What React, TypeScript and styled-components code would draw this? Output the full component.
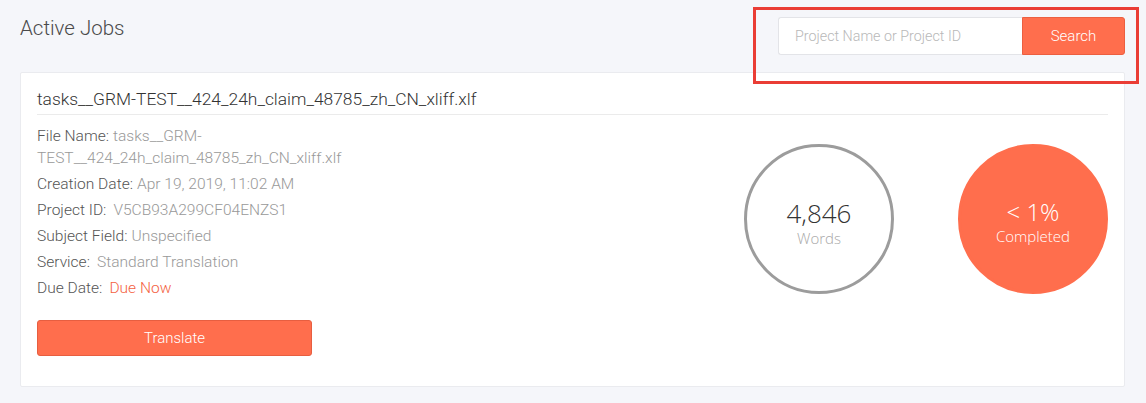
import { FC } from 'react'
import styled, { createGlobalStyle } from 'styled-components'

const ACCENT = '#ff6e4d'

const GlobalStyle = createGlobalStyle`
  html, body {
    margin: 0;
    padding: 0;
    background: #f5f6fa;
    font-family: Roboto, "Liberation Sans", Arial, sans-serif;
  }
  * {
    box-sizing: border-box;
  }
`

interface DetailRow {
  label: string
  value: string
  wide?: boolean
  accent?: boolean
}

const details: DetailRow[] = [
  { label: 'File Name:', value: 'tasks__GRM-TEST__424_24h_claim_48785_zh_CN_xliff.xlf' },
  { label: 'Creation Date:', value: 'Apr 19, 2019, 11:02 AM' },
  { label: 'Project ID:', value: 'V5CB93A299CF04ENZS1', wide: true },
  { label: 'Subject Field:', value: 'Unspecified' },
  { label: 'Service:', value: 'Standard Translation', wide: true },
  { label: 'Due Date:', value: 'Due Now', wide: true, accent: true },
]

const App: FC = () => {
  return (
    <Page>
      <GlobalStyle />
      <Header>
        <Title>Active Jobs</Title>
        <SearchForm onSubmit={(e) => e.preventDefault()}>
          <SearchInput placeholder="Project Name or Project ID" />
          <SearchButton type="submit">Search</SearchButton>
          <Highlight />
        </SearchForm>
      </Header>

      <JobCard>
        <JobTitle>tasks__GRM-TEST__424_24h_claim_48785_zh_CN_xliff.xlf</JobTitle>
        <JobBody>
          <DetailsColumn>
            <DetailList>
              {details.map(({ label, value, wide, accent }) => (
                <DetailItem key={label}>
                  <Label>{label}</Label>
                  <Value $wide={wide} $accent={accent}>
                    {value}
                  </Value>
                </DetailItem>
              ))}
            </DetailList>
            <TranslateButton>Translate</TranslateButton>
          </DetailsColumn>

          <Stats>
            <StatCircle>
              <StatNumber>4,846</StatNumber>
              <StatCaption>Words</StatCaption>
            </StatCircle>
            <StatCircle $filled>
              <StatNumber $filled>&lt; 1%</StatNumber>
              <StatCaption $filled>Completed</StatCaption>
            </StatCircle>
          </Stats>
        </JobBody>
      </JobCard>
    </Page>
  )
}

export default App

const Page = styled.div`
  padding: 17px 21px 16px 20px;
`

const Header = styled.div`
  display: flex;
  justify-content: space-between;
  align-items: flex-start;
  height: 55px;
`

const Title = styled.h1`
  margin: 0;
  font-size: 20.5px;
  line-height: 22px;
  font-weight: 300;
  color: #4a4a4a;
`

const SearchForm = styled.form`
  position: relative;
  display: flex;
  height: 38px;
`

// annotation box drawn over the search area
const Highlight = styled.div`
  position: absolute;
  left: -25px;
  top: -10px;
  right: -14px;
  bottom: -29px;
  border: 3px solid #ea3d35;
  pointer-events: none;
`

const SearchInput = styled.input`
  width: 244px;
  height: 38px;
  border: 1px solid #e3e4e8;
  border-right: none;
  border-radius: 3px 0 0 3px;
  background: #fff;
  padding: 0 16px;
  font-family: inherit;
  font-size: 14.3px;
  font-weight: 300;
  color: #444;
  outline: none;

  &::placeholder {
    color: #b8b8b8;
  }
`

const SearchButton = styled.button`
  width: 103px;
  height: 38px;
  border: 1px solid #ec5f40;
  border-radius: 0 3px 3px 0;
  background: ${ACCENT};
  color: #fff;
  font-family: inherit;
  font-size: 15px;
  font-weight: 300;
  cursor: pointer;
`

const JobCard = styled.div`
  background: #fff;
  border: 1px solid #eaebef;
  border-radius: 2px;
  padding: 16px 16px 31px 16px;
  height: 315px;
`

const JobTitle = styled.div`
  font-size: 17.4px;
  font-weight: 300;
  line-height: 20px;
  color: #333;
  padding-bottom: 5px;
  border-bottom: 1px solid #ebebeb;
`

const JobBody = styled.div`
  display: flex;
  justify-content: space-between;
  padding-top: 10px;
`

const DetailsColumn = styled.div`
  display: flex;
  flex-direction: column;
  width: 340px;
`

const DetailList = styled.div`
  display: flex;
  flex-direction: column;
  gap: 4px;
`

const DetailItem = styled.div`
  font-size: 15.55px;
  font-weight: 300;
  line-height: 22px;
`

const Label = styled.span`
  color: #555;
`

const Value = styled.span<{ $wide?: boolean; $accent?: boolean }>`
  color: ${({ $accent }) => ($accent ? '#f4623f' : '#999')};
  margin-left: ${({ $wide }) => ($wide ? '7px' : '4px')};
`

const TranslateButton = styled.button`
  margin-top: 21px;
  width: 275px;
  height: 36px;
  border: 1px solid #e75e40;
  border-radius: 3px;
  background: ${ACCENT};
  color: #fff;
  font-family: inherit;
  font-size: 15px;
  font-weight: 300;
  cursor: pointer;
`

const Stats = styled.div`
  display: flex;
  gap: 64px;
  margin-top: 19px;
`

const StatCircle = styled.div<{ $filled?: boolean }>`
  width: 150px;
  height: 150px;
  border-radius: 50%;
  display: flex;
  flex-direction: column;
  align-items: center;
  justify-content: center;
  font-family: "Open Sans", "Liberation Sans", sans-serif;
  background: ${({ $filled }) => ($filled ? ACCENT : '#fff')};
  border: 3px solid ${({ $filled }) => ($filled ? ACCENT : '#9c9c9c')};
  padding-top: ${({ $filled }) => ($filled ? '4px' : '8px')};
`

const StatNumber = styled.div<{ $filled?: boolean }>`
  font-size: ${({ $filled }) => ($filled ? '24px' : '26px')};
  font-weight: 300;
  line-height: 30px;
  color: ${({ $filled }) => ($filled ? '#fff' : '#333')};
`

const StatCaption = styled.div<{ $filled?: boolean }>`
  font-size: 15px;
  font-weight: 300;
  line-height: 20px;
  margin-top: ${({ $filled }) => ($filled ? '-1px' : '0')};
  color: ${({ $filled }) => ($filled ? '#fff' : '#a8a8a8')};
`
